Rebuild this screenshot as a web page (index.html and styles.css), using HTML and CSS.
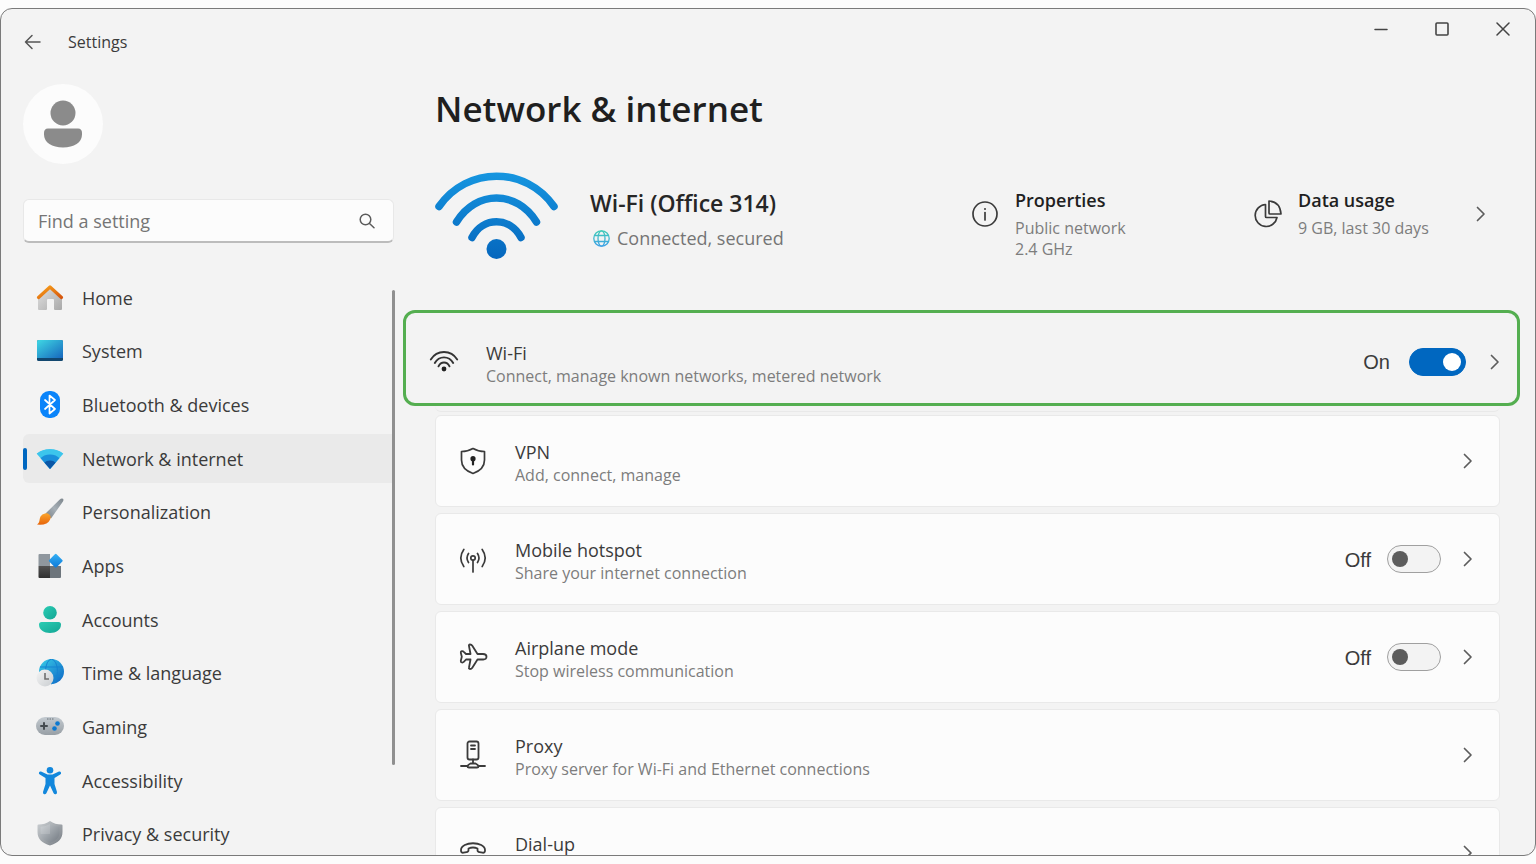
FILE: index.html
```html
<!DOCTYPE html>
<html lang="en">

<head>
    <meta charset="UTF-8">
    <meta name="viewport" content="width=device-width, initial-scale=1.0">
    <title>Settings</title>
    <link rel="stylesheet" href="styles.css">
</head>

<body>
    <svg class="defs" width="0" height="0" aria-hidden="true">
        <symbol id="chevron" viewBox="0 0 12 18">
            <path d="M2.500 2.500L9 9l-6.500 6.500" fill="none" stroke="#5c5c5c" stroke-width="1.700" stroke-linecap="round" stroke-linejoin="round" />
        </symbol>
    </svg>

    <div class="window">
        <header class="titlebar">
            <button class="back" type="button" aria-label="Back">
                <svg width="18" height="16" viewBox="0 0 18 16" fill="none" stroke="#555" stroke-width="1.500" stroke-linecap="round" stroke-linejoin="round"><path d="M16 8H1.500M8 1.500L1.500 8 8 14.500" /></svg>
            </button>
            <span class="app-name">Settings</span>
            <div class="controls">
                <button type="button" aria-label="Minimize">
                    <svg width="14" height="14" viewBox="0 0 14 14"><path d="M1 7.500h12" stroke="#444" stroke-width="1.500" stroke-linecap="round" /></svg>
                </button>
                <button type="button" aria-label="Maximize">
                    <svg width="14" height="14" viewBox="0 0 14 14"><rect x="1" y="1" width="12" height="12" rx="1" fill="none" stroke="#444" stroke-width="1.600" /></svg>
                </button>
                <button type="button" aria-label="Close">
                    <svg width="14" height="14" viewBox="0 0 14 14"><path d="M1 1l12 12M13 1L1 13" stroke="#444" stroke-width="1.500" stroke-linecap="round" /></svg>
                </button>
            </div>
        </header>

        <div class="content">
            <aside class="sidebar">
                <div class="avatar">
                    <svg width="80" height="80" viewBox="0 0 80 80" fill="#8b8b8b">
                        <circle cx="40" cy="29" r="12.500" />
                        <path d="M25 44.500h30q4 0 4 4.500v1.500c0 8-8 13-19 13s-19-5-19-13V49q0-4.500 4-4.500z" />
                    </svg>
                </div>

                <form class="search">
                    <input type="text" placeholder="Find a setting" aria-label="Find a setting">
                    <button type="button" aria-label="Search">
                        <svg width="16" height="16" viewBox="0 0 16 16" fill="none" stroke="#5c5c5c" stroke-width="1.500" stroke-linecap="round"><circle cx="6.500" cy="6.500" r="5.300" /><path d="M10.500 10.500l4.500 4.300" /></svg>
                    </button>
                </form>

                <nav class="menu">
                    <a href="#home">
                        <svg viewBox="0 0 28 28">
                            <defs>
                                <linearGradient id="wall" x1="0" y1="0" x2="1" y2="1"><stop offset="0" stop-color="#e2e2e2" /><stop offset="1" stop-color="#a9a9a9" /></linearGradient>
                                <linearGradient id="roof" x1="0" y1="0" x2="1" y2="1"><stop offset="0" stop-color="#f9a31b" /><stop offset="1" stop-color="#d6550c" /></linearGradient>
                            </defs>
                            <path d="M2 13L14 2.500 26 13v12q0 1-1 1h-6q-1 0-1-1v-9q0-1-1-1h-5q-1 0-1 1v9q0 1-1 1H3q-1 0-1-1z" fill="url(#wall)" />
                            <path d="M2.500 13.500L14 3l11.500 10.500" fill="none" stroke="url(#roof)" stroke-width="3.200" stroke-linecap="round" stroke-linejoin="round" />
                        </svg>
                        Home
                    </a>
                    <a href="#system">
                        <svg viewBox="0 0 28 28">
                            <defs><linearGradient id="screen" x1="0" y1="0" x2="1" y2="1"><stop offset="0" stop-color="#3fd8e4" /><stop offset="1" stop-color="#1767bd" /></linearGradient></defs>
                            <rect x="1" y="3" width="26" height="21" rx="1.500" fill="#12476f" />
                            <path d="M2.500 3h23q1.500 0 1.500 1.500V21H1V4.500Q1 3 2.500 3z" fill="url(#screen)" />
                        </svg>
                        System
                    </a>
                    <a href="#bluetooth">
                        <svg viewBox="0 0 28 28">
                            <rect x="4" y="0" width="20" height="27" rx="9" fill="#0a84fa" />
                            <path d="M9 9l10 9-5.500 4.500v-18L19 9 9 18" fill="none" stroke="#fff" stroke-width="1.700" stroke-linejoin="round" stroke-linecap="round" />
                        </svg>
                        Bluetooth &amp; devices
                    </a>
                    <a class="active" href="#network" aria-current="page">
                        <svg viewBox="0 0 28 28">
                            <clipPath id="fan"><path d="M14 24L.5 8.500Q6 4 14 4t13.500 4.500z" /></clipPath>
                            <g clip-path="url(#fan)">
                                <circle cx="14" cy="24" r="20.500" fill="#3cc5ec" />
                                <circle cx="14" cy="24" r="14.500" fill="#1a8fdb" />
                                <circle cx="14" cy="24" r="8.500" fill="#0b57a6" />
                            </g>
                        </svg>
                        Network &amp; internet
                    </a>
                    <a href="#personalization">
                        <svg viewBox="0 0 28 28">
                            <defs>
                                <linearGradient id="handle" x1="1" y1="0" x2="0" y2="1"><stop offset="0" stop-color="#7d868d" /><stop offset=".5" stop-color="#a6afb6" /><stop offset="1" stop-color="#777f86" /></linearGradient>
                                <linearGradient id="bristle" x1="0" y1="0" x2="0" y2="1"><stop offset="0" stop-color="#fba52c" /><stop offset="1" stop-color="#e7650a" /></linearGradient>
                            </defs>
                            <path d="M27 .8q1 1-.2 3L15 20.500 9.500 15.500 23.500 1.800q2-2 3.500-1z" fill="url(#handle)" />
                            <path d="M9 15.500q2.500-.8 4.500 1.200t.5 5Q11.500 27.500 1 26.500c3-1.500 2-4.500 3.500-8Q6 16 9 15.500z" fill="url(#bristle)" />
                        </svg>
                        Personalization
                    </a>
                    <a href="#apps">
                        <svg viewBox="0 0 28 28">
                            <defs>
                                <linearGradient id="tile" x1="0" y1="0" x2="0" y2="1"><stop offset="0" stop-color="#525252" /><stop offset="1" stop-color="#303030" /></linearGradient>
                                <linearGradient id="gem" x1="0" y1="0" x2="1" y2="1"><stop offset="0" stop-color="#35b2f5" /><stop offset="1" stop-color="#0c77d8" /></linearGradient>
                            </defs>
                            <path d="M3.500 2H14v12H2.500V3q0-1 1-1z" fill="#8f979e" />
                            <path d="M14 14h11v11q0 1-1 1H14z" fill="#6d757c" />
                            <path d="M2.500 14H14v12H3.500q-1 0-1-1z" fill="url(#tile)" />
                            <rect x="14.500" y="3.500" width="10.500" height="10.500" rx="1.200" transform="rotate(45 19.750 8.750)" fill="url(#gem)" />
                        </svg>
                        Apps
                    </a>
                    <a href="#accounts">
                        <svg viewBox="0 0 28 28">
                            <defs><linearGradient id="teal" x1="0" y1="0" x2="1" y2="1"><stop offset="0" stop-color="#2bcdb4" /><stop offset="1" stop-color="#12a594" /></linearGradient></defs>
                            <circle cx="14" cy="6.800" r="6.800" fill="url(#teal)" />
                            <path d="M5.500 16h17q2.500 0 2.500 2.500c0 5.500-5 8.500-11 8.500S3 24 3 18.500Q3 16 5.500 16z" fill="url(#teal)" />
                        </svg>
                        Accounts
                    </a>
                    <a href="#time">
                        <svg viewBox="0 0 28 28">
                            <defs>
                                <linearGradient id="earth" x1="0" y1="0" x2="1" y2="1"><stop offset="0" stop-color="#39cfe8" /><stop offset="1" stop-color="#0d62c4" /></linearGradient>
                                <linearGradient id="dial" x1="0" y1="0" x2="1" y2="1"><stop offset="0" stop-color="#f5f5f5" /><stop offset="1" stop-color="#c9cdd0" /></linearGradient>
                            </defs>
                            <circle cx="15.500" cy="12.500" r="12.500" fill="url(#earth)" />
                            <g fill="none" stroke="#1583d1" stroke-width="1"><path d="M4 8h23M4 17h23" /><ellipse cx="15.500" cy="12.500" rx="6" ry="12.300" /></g>
                            <circle cx="9" cy="19" r="8.500" fill="url(#dial)" />
                            <path d="M9 14v6h4" fill="none" stroke="#707070" stroke-width="1.600" />
                        </svg>
                        Time &amp; language
                    </a>
                    <a href="#gaming">
                        <svg viewBox="0 0 28 28">
                            <defs><linearGradient id="pad" x1="0" y1="0" x2="0" y2="1"><stop offset="0" stop-color="#c3cad0" /><stop offset="1" stop-color="#989fa5" /></linearGradient></defs>
                            <rect x="0" y="4" width="28" height="18" rx="9" fill="url(#pad)" />
                            <path d="M8 10v6M5 13h6" stroke="#454b50" stroke-width="2" stroke-linecap="round" />
                            <circle cx="21.500" cy="10.500" r="2.300" fill="#0d79d0" /><circle cx="18.500" cy="15.500" r="2.300" fill="#0d79d0" />
                            <path d="M11 6h1.500M13.500 6H15M16 6h1.500" stroke="#666e74" stroke-width="1.200" />
                        </svg>
                        Gaming
                    </a>
                    <a href="#accessibility">
                        <svg viewBox="0 0 28 28" fill="#1287dc">
                            <circle cx="14" cy="3.300" r="3.300" />
                            <path d="M5 4.500l6.500 3h5l6.500-3q1.500-.3 2 1t-.8 2L18.500 11v6l2.500 8q.3 2-1.200 2.300t-2.300-1.300L14 18.500l-3.500 7.500q-.8 1.600-2.300 1.300T7 25l2.500-8v-6L3.800 7.500Q2.500 6.800 3 5.500t2-1z" />
                        </svg>
                        Accessibility
                    </a>
                    <a href="#privacy">
                        <svg viewBox="0 0 28 28">
                            <defs>
                                <linearGradient id="rim" x1="0" y1="0" x2="1" y2="1"><stop offset="0" stop-color="#cdd1d4" /><stop offset="1" stop-color="#757b82" /></linearGradient>
                                <linearGradient id="plate" x1="0" y1="0" x2="1" y2="1"><stop offset="0" stop-color="#c5cace" /><stop offset="1" stop-color="#737a82" /></linearGradient>
                            </defs>
                            <path d="M14 1q5 3.500 11.500 3.500 1 0 1 1V12c0 7-4.500 11-12.500 13.500C6 23 1.500 19 1.500 12V5.500q0-1 1-1Q9 4.500 14 1z" fill="url(#rim)" />
                            <path d="M14 4q4 2.500 9.500 2.800V12c0 5.500-3 8.500-9.500 11C7.500 20.500 4.500 17.500 4.500 12V6.800Q10 6.500 14 4z" fill="url(#plate)" />
                            <path d="M14 4v10H4.700Q4.500 13 4.500 12V6.800Q10 6.500 14 4z" fill="#fff" opacity=".15" />
                        </svg>
                        Privacy &amp; security
                    </a>
                    <span class="scrollbar"></span>
                </nav>
            </aside>

            <main class="page">
                <h1>Network &amp; internet</h1>

                <section class="status">
                    <svg class="signal" viewBox="0 0 124 88">
                        <defs><linearGradient id="blue" gradientUnits="userSpaceOnUse" x1="0" y1="0" x2="0" y2="88"><stop offset="0" stop-color="#1696e0" /><stop offset="1" stop-color="#0566bd" /></linearGradient></defs>
                        <g fill="none" stroke="url(#blue)" stroke-width="7.500" stroke-linecap="round">
                            <path d="M4 34.500C32-6 91-6 119 34.500" />
                            <path d="M21.500 50C41 18 82 18 101.500 50" />
                            <path d="M37 65.500C48 44.500 75 44.500 86 65.500" />
                        </g>
                        <circle cx="61.500" cy="77" r="10" fill="url(#blue)" />
                    </svg>
                    <div class="connection">
                        <h2>Wi-Fi (Office 314)</h2>
                        <p>
                            <svg width="17" height="17" viewBox="0 0 17 17" fill="none" stroke="url(#globe)" stroke-width="1.300">
                                <defs><linearGradient id="globe" gradientUnits="userSpaceOnUse" x1="0" y1="0" x2="0" y2="17"><stop offset="0" stop-color="#41cdb5" /><stop offset="1" stop-color="#3c9fe8" /></linearGradient></defs>
                                <circle cx="8.500" cy="8.500" r="7.700" />
                                <ellipse cx="8.500" cy="8.500" rx="3.500" ry="7.700" />
                                <path d="M1.500 5.500h14M1.500 11.500h14" />
                            </svg>
                            Connected, secured
                        </p>
                    </div>
                    <a class="info" href="#properties">
                        <svg width="28" height="28" viewBox="0 0 28 28" fill="none" stroke="#3b3b3b" stroke-width="1.700">
                            <circle cx="14" cy="14" r="12" />
                            <path d="M14 12.500V20" stroke-linecap="round" /><circle cx="14" cy="9" r="1" fill="#3b3b3b" stroke="none" />
                        </svg>
                        <span><strong>Properties</strong><small>Public network</small><small>2.4 GHz</small></span>
                    </a>
                    <a class="info" href="#usage">
                        <svg width="28" height="28" viewBox="0 0 28 28" fill="none" stroke="#3b3b3b" stroke-width="1.700" stroke-linejoin="round">
                            <path d="M11.500 4.500A11 11 0 1 0 23 17.500H12.500q-1 0-1-1z" />
                            <path d="M15 1q11 .5 12 13H16q-1 0-1-1z" />
                        </svg>
                        <span><strong>Data usage</strong><small>9 GB, last 30 days</small></span>
                        <svg class="chevron"><use href="#chevron" /></svg>
                    </a>
                </section>

                <ul class="cards">
                    <li class="card highlight">
                        <svg class="icon" viewBox="0 0 30 30" fill="none" stroke="#333" stroke-width="1.900" stroke-linecap="round">
                            <path d="M1.800 12.500C8 2.500 22 2.500 28.200 12.500M5.800 16C10 8.500 20 8.500 24.200 16M9.500 19.300c2.500-5 8.500-5 11 0" />
                            <circle cx="15" cy="22" r="2.400" fill="#222" stroke="none" />
                        </svg>
                        <div class="text">
                            <h3>Wi-Fi</h3>
                            <p>Connect, manage known networks, metered network</p>
                        </div>
                        <label for="wifi">On</label>
                        <input class="toggle" type="checkbox" id="wifi" checked>
                        <button class="open" type="button" aria-label="Open Wi-Fi"><svg class="chevron"><use href="#chevron" /></svg></button>
                    </li>
                    <li class="card">
                        <svg class="icon" viewBox="0 0 30 30" fill="none" stroke="#3b3b3b" stroke-width="1.700" stroke-linejoin="round">
                            <path d="M15 2.500q5 3 11.500 3V14c0 7-4.500 11-11.500 13.500C8 25 3.500 21 3.500 14V5.500Q10 5.500 15 2.500z" />
                            <circle cx="15" cy="12.700" r="2.600" fill="#222" stroke="none" /><path d="M15 13v5.500" stroke="#222" stroke-width="2.200" stroke-linecap="round" />
                        </svg>
                        <div class="text">
                            <h3>VPN</h3>
                            <p>Add, connect, manage</p>
                        </div>
                        <button class="open" type="button" aria-label="Open VPN"><svg class="chevron"><use href="#chevron" /></svg></button>
                    </li>
                    <li class="card">
                        <svg class="icon" viewBox="0 0 30 30" fill="none" stroke="#3b3b3b" stroke-width="1.700" stroke-linecap="round">
                            <circle cx="15" cy="14" r="2.200" /><path d="M15 16.500V28M10.500 9.500q-3 4.500 0 9M19.500 9.500q3 4.500 0 9M5.800 5.500q-6 8.500 0 17M24.200 5.500q6 8.500 0 17" />
                        </svg>
                        <div class="text">
                            <h3>Mobile hotspot</h3>
                            <p>Share your internet connection</p>
                        </div>
                        <label for="hotspot">Off</label>
                        <input class="toggle" type="checkbox" id="hotspot">
                        <button class="open" type="button" aria-label="Open Mobile hotspot"><svg class="chevron"><use href="#chevron" /></svg></button>
                    </li>
                    <li class="card">
                        <svg class="icon" viewBox="0 0 30 30" fill="none" stroke="#3b3b3b" stroke-width="1.800" stroke-linejoin="round">
                            <path d="M11 4q-.5-1.500 1-1.500 1.500 0 2.300 1.300L19.500 12H25q3.500 0 3.500 2.800T25 17.500h-5.500l-5.200 8.200q-.8 1.300-2.300 1.300t-1-1.500l1.500-8H8L5.800 19.800q-.8 1-2 .7t-1-1.700l1-4-1-4q-.2-1.500 1-1.700t2 .7L8 12h4.500z" />
                        </svg>
                        <div class="text">
                            <h3>Airplane mode</h3>
                            <p>Stop wireless communication</p>
                        </div>
                        <label for="airplane">Off</label>
                        <input class="toggle" type="checkbox" id="airplane">
                        <button class="open" type="button" aria-label="Open Airplane mode"><svg class="chevron"><use href="#chevron" /></svg></button>
                    </li>
                    <li class="card">
                        <svg class="icon" viewBox="0 0 30 30" fill="none" stroke="#3b3b3b" stroke-width="1.800" stroke-linecap="round" stroke-linejoin="round">
                            <rect x="9.500" y="1.500" width="11" height="18" rx="2" /><path d="M13 5.500h4M13 9h4M15 19.500V23M3 26h6.500M20.500 26H27" />
                            <path d="M12.500 23.500h5q3 1.500 3 3 0 1-1.500 1h-8q-1.500 0-1.500-1 0-1.500 3-3z" />
                        </svg>
                        <div class="text">
                            <h3>Proxy</h3>
                            <p>Proxy server for Wi-Fi and Ethernet connections</p>
                        </div>
                        <button class="open" type="button" aria-label="Open Proxy"><svg class="chevron"><use href="#chevron" /></svg></button>
                    </li>
                    <li class="card">
                        <svg class="icon" viewBox="0 0 30 30" fill="none" stroke="#3b3b3b" stroke-width="1.800" stroke-linejoin="round">
                            <path d="M3 12c0-9 24-9 24 0v.5q0 2.500-2.500 2.200l-3-.5q-2-.3-2-2.200v-1.500q-4.500-2-9 0V12q0 1.900-2 2.200l-3 .5Q3 15 3 12.500z" />
                        </svg>
                        <div class="text">
                            <h3>Dial-up</h3>
                        </div>
                        <button class="open" type="button" aria-label="Open Dial-up"><svg class="chevron"><use href="#chevron" /></svg></button>
                    </li>
                </ul>
            </main>
        </div>
    </div>
</body>

</html>
```
FILE: styles.css
```css
* {
    box-sizing: border-box;
    margin: 0;
    padding: 0;
}

body {
    height: 100vh;
    padding: 8px 0;
    background: #fcfcfc;
    color: #3b3b3b;
    font-family: "Segoe UI", "Open Sans", "Noto Sans", sans-serif;
    font-size: 18px;
    overflow: hidden;
}

button {
    display: flex;
    align-items: center;
    justify-content: center;
    border: none;
    background: none;
    cursor: pointer;
}

a {
    color: inherit;
    text-decoration: none;
}

svg {
    display: block;
    flex: none;
}

.defs {
    position: absolute;
}

.window {
    display: flex;
    flex-direction: column;
    height: 100%;
    border: 1px solid #7a7a7a;
    border-radius: 12px;
    background: #f3f3f3;
    overflow: hidden;
}

/* title bar */

.titlebar {
    display: flex;
    align-items: center;
    height: 66px;
    flex: none;
    padding: 0 2px 0 12px;
}

.back {
    width: 40px;
    height: 40px;
}

.app-name {
    margin-left: 15px;
    font-size: 16px;
}

.controls {
    display: flex;
    align-self: flex-start;
    margin-left: auto;
}

.controls button {
    width: 61px;
    height: 40px;
}

.content {
    display: flex;
    flex: 1;
    min-height: 0;
    padding-top: 9px;
}

/* sidebar */

.sidebar {
    display: flex;
    flex-direction: column;
    width: 393px;
    flex: none;
    padding-left: 22px;
}

.avatar {
    width: 80px;
    height: 80px;
    border-radius: 50%;
    background: #fcfcfc;
}

.search {
    display: flex;
    height: 44px;
    flex: none;
    margin: 35px 0 30px;
    border: 1px solid #e8e8e8;
    border-bottom: 2px solid #bcbcbc;
    border-radius: 6px;
    background: #fcfcfc;
}

.search input {
    flex: 1;
    min-width: 0;
    padding-left: 14px;
    border: none;
    outline: none;
    background: none;
    font: inherit;
}

.search input::placeholder {
    color: #757575;
    opacity: 1;
}

.search button {
    width: 52px;
}

.menu {
    display: flex;
    flex-direction: column;
    flex: 1;
    justify-content: space-between;
    margin-bottom: -4px;
    position: relative;
}

.menu a {
    display: flex;
    align-items: center;
    gap: 18px;
    height: 49px;
    padding-left: 13px;
    border-radius: 6px 0 0 6px;
    position: relative;
}

.menu a svg {
    width: 28px;
    height: 28px;
}

.menu .active {
    background: #eaeaea;
}

.menu .active::before {
    content: "";
    width: 4px;
    height: 22px;
    border-radius: 2px;
    background: #0067c0;
    position: absolute;
    left: 0;
    top: 14px;
}

.scrollbar {
    width: 3px;
    height: 81%;
    border-radius: 2px;
    background: #8f8f8f;
    position: absolute;
    right: -1px;
    top: 17px;
}

/* main page */

.page {
    flex: 1;
    min-width: 0;
    padding: 0 35px 0 41px;
}

h1 {
    color: #1f1f1f;
    font-size: 35px;
    font-weight: 600;
    line-height: 50px;
}

.status {
    display: flex;
    margin: 38px 0 50px;
}

.signal {
    width: 124px;
    height: 88px;
}

.connection {
    margin: 15px auto 0 31px;
}

.connection h2 {
    color: #262626;
    font-size: 23px;
    font-weight: 600;
    line-height: 32px;
}

.connection p {
    display: flex;
    align-items: center;
    gap: 7px;
    margin-top: 6px;
    padding-left: 3px;
    color: #757575;
    line-height: 26px;
}

.info {
    display: flex;
    width: 283px;
    padding-top: 15px;
}

.info > svg {
    margin-top: 13px;
}

.info span {
    margin-left: 16px;
}

.info strong {
    display: block;
    color: #1f1f1f;
    font-weight: 600;
    line-height: 26px;
    margin-bottom: 5px;
}

.info small {
    display: block;
    color: #7d7d7d;
    font-size: 16px;
    line-height: 21px;
}

.chevron {
    width: 12px;
    height: 18px;
}

.info:last-child {
    width: 246px;
}

.info > .chevron {
    margin: 18px 13px 0 auto;
}

.cards {
    display: flex;
    flex-direction: column;
    gap: 6px;
    list-style: none;
}

.card {
    display: flex;
    align-items: center;
    height: 92px;
    flex: none;
    padding: 0 21px 0 22px;
    border: 1px solid #e9e9e9;
    border-radius: 6px;
    background: #fcfcfc;
}

.highlight {
    height: 96px;
    margin: 0 -20px 3px -32px;
    padding: 7px 12px 0 23px;
    border: 3px solid #54ae50;
    border-radius: 12px;
    background: #f3f3f3;
    position: relative;
}

/* bottom edge of the card under the highlight */
.highlight::after {
    content: "";
    height: 8px;
    border-bottom: 1px solid #e9e9e9;
    border-radius: 0 0 6px 6px;
    position: absolute;
    left: 29px;
    right: 17px;
    top: 100%;
}

.icon {
    width: 30px;
    height: 30px;
}

.text {
    min-height: 50px;
    margin: 0 auto 0 27px;
    padding-top: 4px;
}

.text h3 {
    font-size: 18px;
    font-weight: 400;
    line-height: 24px;
}

.text p {
    color: #7d7d7d;
    font-size: 16px;
    line-height: 22px;
}

.card label {
    margin-right: 16px;
    padding-top: 2px;
    font-family: "Liberation Sans", Arial, sans-serif;
    font-size: 20px;
}

.toggle {
    display: flex;
    align-items: center;
    width: 54px;
    height: 28px;
    padding: 0 4px;
    appearance: none;
    border: 1px solid #a0a0a0;
    border-radius: 14px;
    background: #f3f3f3;
    cursor: pointer;
}

.toggle::before {
    content: "";
    width: 16px;
    height: 16px;
    border-radius: 50%;
    background: #5c5c5c;
}

.toggle:checked {
    justify-content: flex-end;
    width: 57px;
    border-color: #0067c0;
    background: #0067c0;
}

.toggle:checked::before {
    width: 18px;
    height: 18px;
    background: #fff;
}

.open {
    width: 20px;
    height: 32px;
    margin-left: 17px;
}

.highlight label {
    margin-right: 19px;
}

.highlight .open {
    margin-left: 19px;
}
```
